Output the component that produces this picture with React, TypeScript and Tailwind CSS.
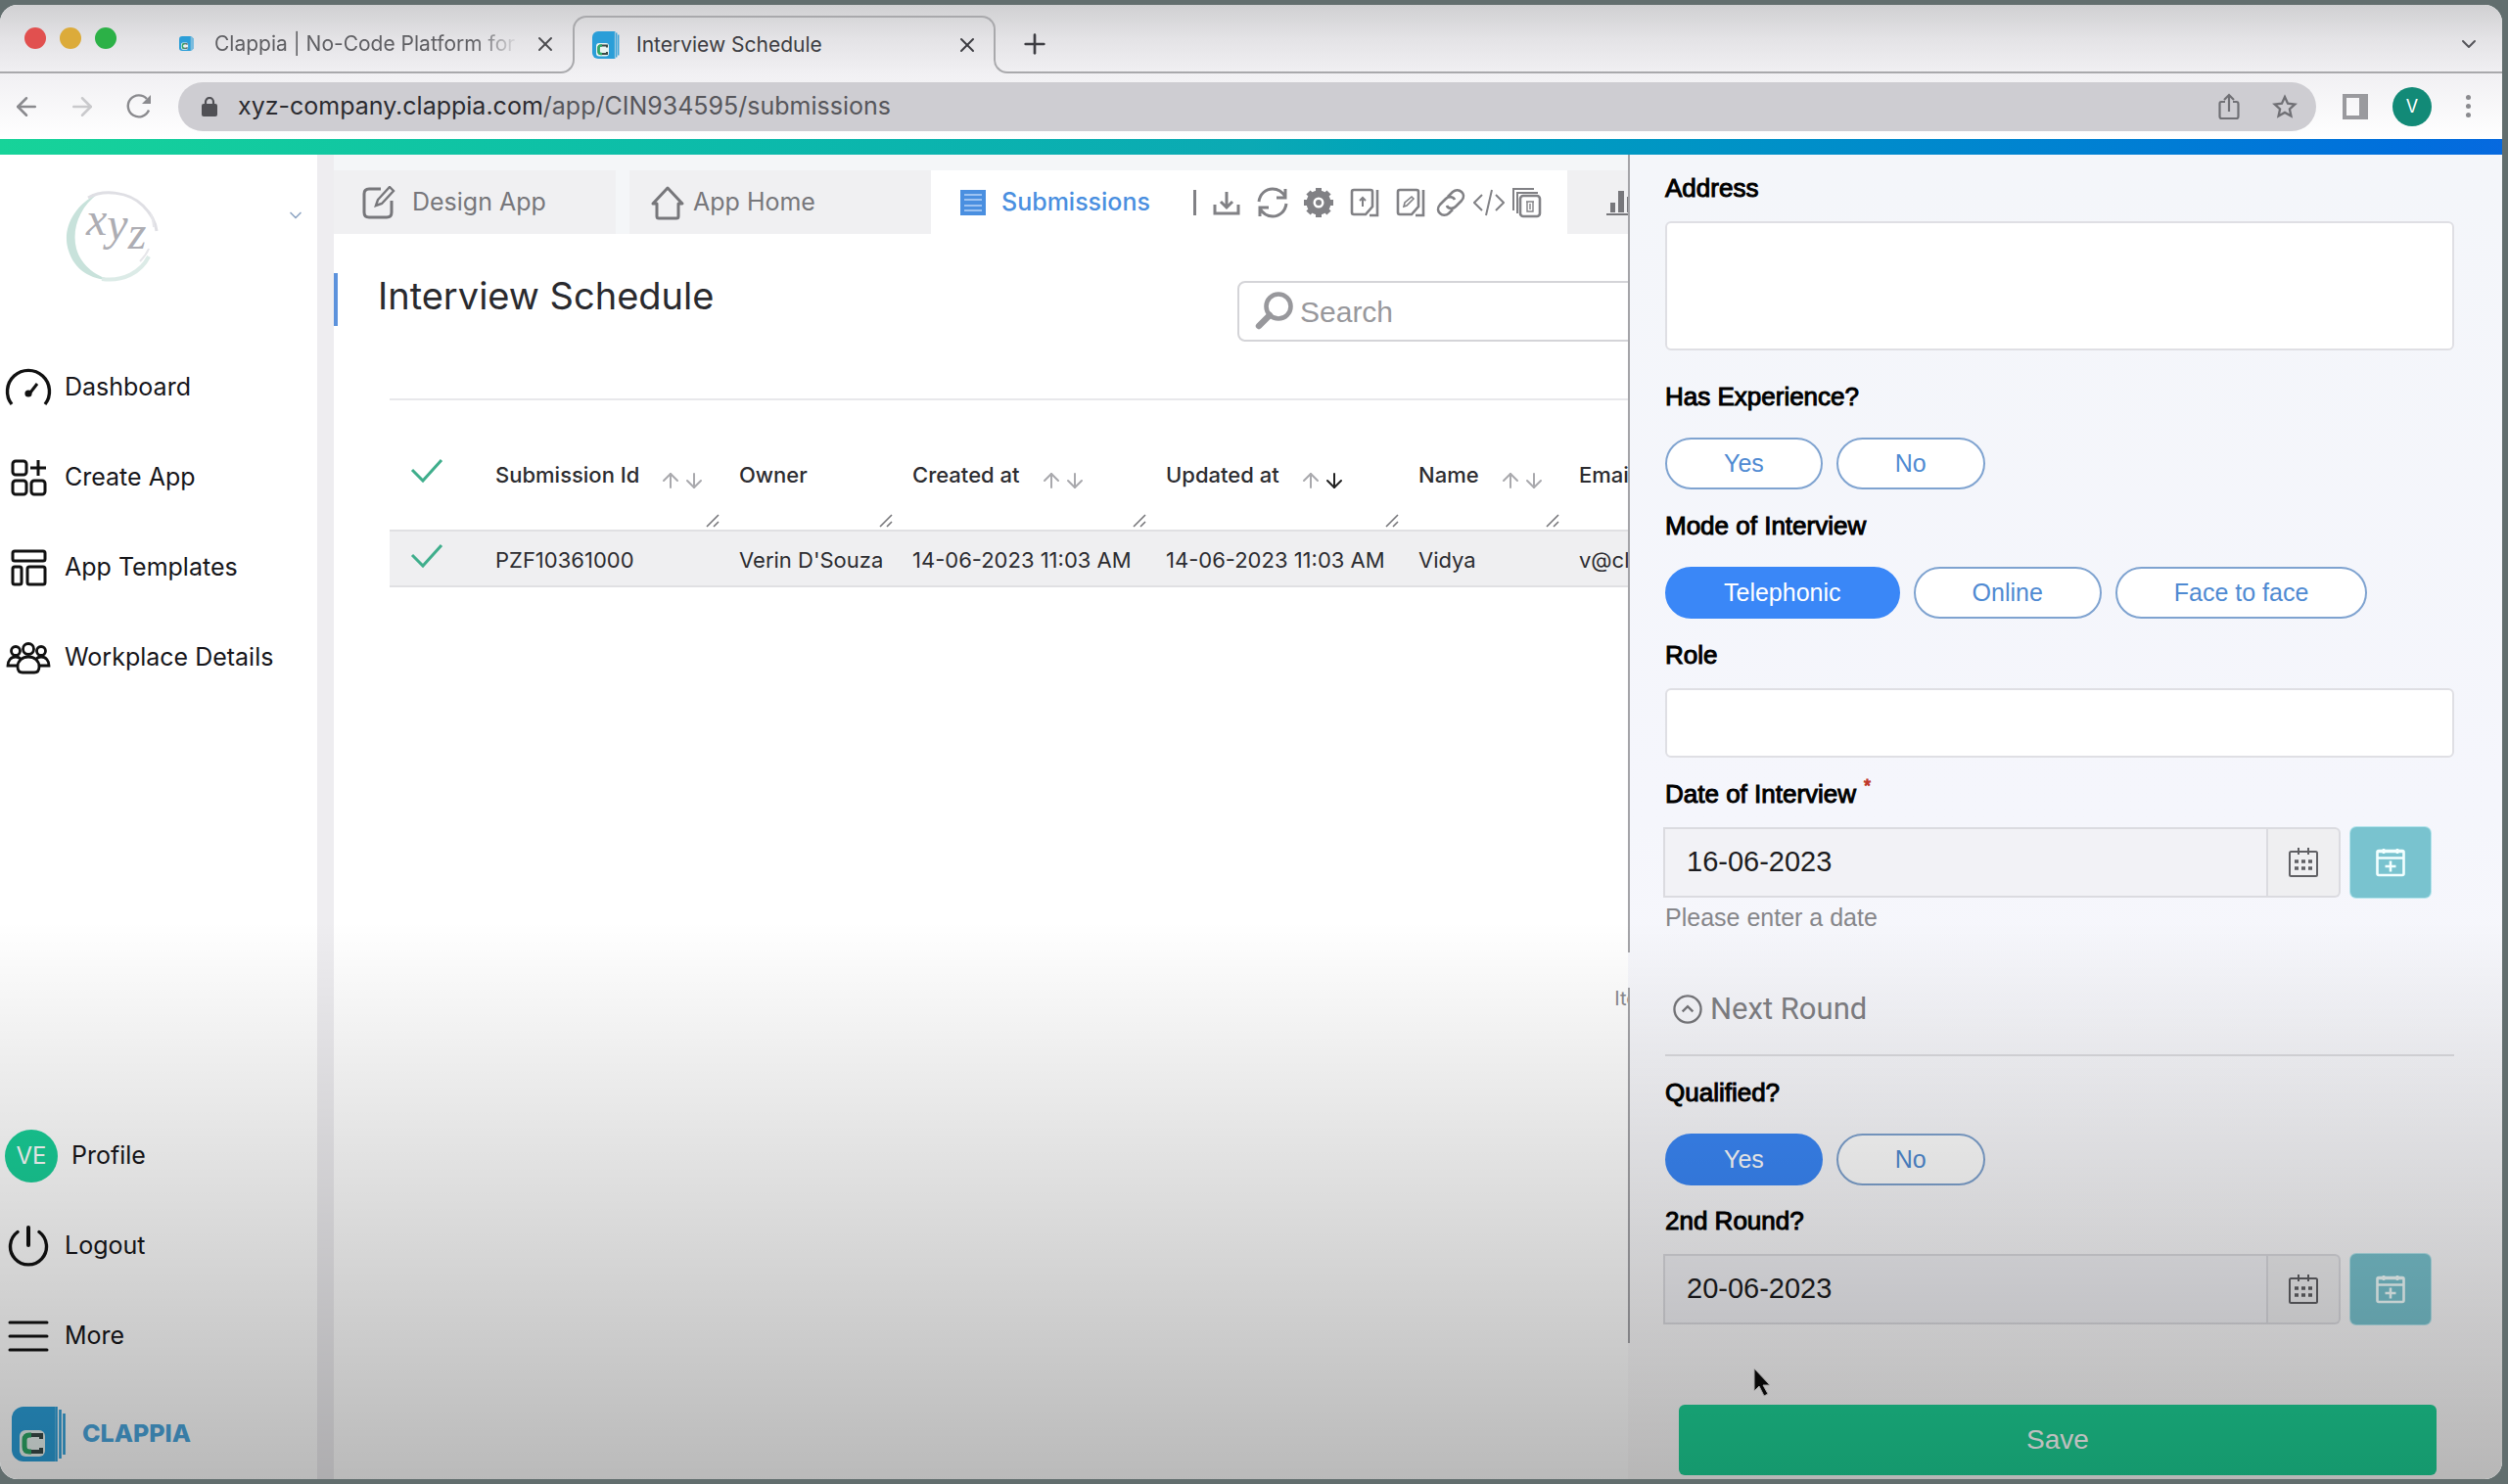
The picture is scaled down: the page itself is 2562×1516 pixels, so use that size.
import { useState, type ReactNode } from "react";
import { ArrowDown, ArrowLeft, ArrowRight, ArrowUp, ChevronDown, Plus, Star, X } from "lucide-react";

function ClappiaMark({ className }: { className: string }) {
  return (
    <svg className={className} viewBox="0 0 56 56" fill="none">
      <path d="M12 0h32v56H12A12 12 0 0 1 0 44V12A12 12 0 0 1 12 0z" fill="#2b9ed8" />
      <path d="M45.5 0v56M49.5 3v50M53.5 7v42" stroke="#2b9ed8" strokeWidth="2.6" />
      <rect x="8" y="24" width="26" height="27" rx="6" fill="#e9f3f0" />
      <path d="M30 33v-4H18q-5 0-5 5v7q0 5 5 5h12v-4" stroke="#3a4a48" strokeWidth="4" />
      <path d="M20 29h-2q-5 0-5 5v7q0 5 5 5h2" stroke="#2ea866" strokeWidth="5" />
    </svg>
  );
}

function WorkspaceLogo() {
  return (
    <svg className="w-[100px] h-[96px]" viewBox="0 0 100 96" fill="none">
      <path d="M34 4C8 16-3 42 4 62c6 20 24 31 46 30C34 90 17 78 12 60 7 40 15 18 34 4z" fill="#c8e2db" />
      <path d="M24 8C40-1 66 2 80 16c8 8 13 16 14 26" stroke="#dfdfe4" strokeWidth="3" />
      <path d="M38 91c22 3 40-7 48-23" stroke="#dcebe7" strokeWidth="4" />
      <path d="M88 24c2 5 3 9 3 14M86 60c-2 5-5 9-9 13" stroke="#e6e6ea" strokeWidth="2" />
      <text x="22" y="46" fill="#adadb3" fontFamily="Liberation Serif, serif" fontStyle="italic" fontSize="48">
        x
        <tspan dy="5">y</tspan>
        <tspan dy="9">z</tspan>
      </text>
    </svg>
  );
}

function SideItem({ icon, label }: { icon: ReactNode; label: string }) {
  return (
    <a href="#" className="flex items-center h-[92px] pl-1 gap-3 text-[25px] text-[#16161a]">
      <span className="flex justify-center w-[50px] shrink-0">{icon}</span>
      {label}
    </a>
  );
}

const sideIcon = "size-12";

function SideBar() {
  return (
    <aside className="flex flex-col w-[324px] shrink-0 bg-white">
      <div className="flex items-start justify-between h-[192px] pt-9 pl-[66px] pr-3">
        <WorkspaceLogo />
        <button type="button" aria-label="Switch workplace" className="pt-4">
          <ChevronDown className="size-5 text-[#8fa6c4]" strokeWidth={2} />
        </button>
      </div>
      <nav>
        <SideItem
          label="Dashboard"
          icon={
            <svg className={sideIcon} viewBox="0 0 48 48" fill="none" stroke="#111" strokeWidth="3.4">
              <path d="M7 41A21.5 21.5 0 1 1 41 41" />
              <path d="M33 20 26 29" strokeWidth="3" />
              <circle cx="24" cy="30" r="3.6" fill="#111" stroke="none" />
            </svg>
          }
        />
        <SideItem
          label="Create App"
          icon={
            <svg className={sideIcon} viewBox="0 0 48 48" fill="none" stroke="#111" strokeWidth="3">
              <rect x="8" y="7" width="14" height="14" rx="3" />
              <rect x="8" y="27" width="14" height="14" rx="3" />
              <rect x="27" y="27" width="14" height="14" rx="3" />
              <path d="M34 6v16M26 14h16" />
            </svg>
          }
        />
        <SideItem
          label="App Templates"
          icon={
            <svg className={sideIcon} viewBox="0 0 48 48" fill="none" stroke="#111" strokeWidth="3">
              <rect x="8" y="7" width="33" height="10" rx="2" />
              <rect x="8" y="23" width="9" height="18" rx="2" />
              <rect x="23" y="23" width="18" height="18" rx="2" />
            </svg>
          }
        />
        <SideItem
          label="Workplace Details"
          icon={
            <svg className={sideIcon} viewBox="0 0 48 48" fill="none" stroke="#111" strokeWidth="2.8">
              <circle cx="24" cy="15" r="5.5" />
              <circle cx="11" cy="17" r="4.5" />
              <circle cx="37" cy="17" r="4.5" />
              <path d="M13 33c0-6 5-10 11-10s11 4 11 10c0 4-2 6-5 6H18c-3 0-5-2-5-6z" />
              <path d="M13 32H3c0-5 3-9 8-9 2 0 3 0 5 2M35 32h10c0-5-3-9-8-9-2 0-3 0-5 2" />
            </svg>
          }
        />
      </nav>
      <nav className="mt-auto">
        <a href="#" className="flex items-center h-[92px] pl-[5px] gap-[14px] text-[25px] text-[#16161a]">
          <span className="flex items-center justify-center size-[54px] rounded-full bg-[#19cf98] text-white text-[24px]">
            VE
          </span>
          Profile
        </a>
        <SideItem
          label="Logout"
          icon={
            <svg className={sideIcon} viewBox="0 0 48 48" fill="none" stroke="#111" strokeWidth="3.4" strokeLinecap="round">
              <path d="M13 9.5A18.5 18.5 0 1 0 35 9.5" />
              <path d="M24 5v18" strokeWidth="4" />
            </svg>
          }
        />
        <SideItem
          label="More"
          icon={
            <svg className={sideIcon} viewBox="0 0 48 48" fill="none" stroke="#111" strokeWidth="3" strokeLinecap="round">
              <path d="M5 10h38M5 24h38M5 38h38" />
            </svg>
          }
        />
        <a href="#" className="flex items-center h-[100px] pt-2 pl-3 gap-4 text-[25px] font-extrabold text-[#4aa5dc]">
          <ClappiaMark className="size-14" />
          CLAPPIA
        </a>
      </nav>
    </aside>
  );
}

function BrowserTabs() {
  return (
    <div className="flex items-end h-[70px] bg-linear-to-b from-[#d0d0d2] via-[#e4e3e6] to-[#f1f0f3] text-[21px]">
      <div className="flex items-center w-[587px] h-[45px] pb-[14px] pl-[25px] border-b-2 border-r-2 border-[#a9a9ac] rounded-br-[14px] text-[#5f5f63]">
        <div className="flex gap-[14px] pb-3">
          <span className="size-[22px] rounded-full bg-[#e1504f]" />
          <span className="size-[22px] rounded-full bg-[#dcab3a]" />
          <span className="size-[22px] rounded-full bg-[#2cb147]" />
        </div>
        <ClappiaMark className="size-[15px] ml-[64px] shrink-0" />
        <div className="w-[312px] ml-[21px] whitespace-nowrap mask-r-from-85%">Clappia | No-Code Platform for</div>
        <button type="button" aria-label="Close tab" className="ml-[14px]">
          <X className="size-6 text-[#4c4c50]" strokeWidth={2} />
        </button>
      </div>
      <div className="relative flex items-center w-[432px] h-[59px] -mx-[2px] pl-5 pr-[17px]">
        <div className="absolute inset-x-0 top-0 h-[14px] border-t-2 border-x-2 border-[#a9a9ac] rounded-t-[14px]" />
        <ClappiaMark className="size-[28px] shrink-0" />
        <span className="flex-1 ml-[17px] text-[#3d3d42]">Interview Schedule</span>
        <button type="button" aria-label="Close tab">
          <X className="size-6 text-[#3d3d42]" strokeWidth={2} />
        </button>
      </div>
      <div className="flex flex-1 items-center justify-between h-[45px] pb-[14px] pl-6 pr-[22px] border-b-2 border-l-2 border-[#a9a9ac] rounded-bl-[14px]">
        <button type="button" aria-label="New tab">
          <Plus className="size-8 text-[#3d3d42]" strokeWidth={2} />
        </button>
        <ChevronDown className="size-6 text-[#55555a]" strokeWidth={2} />
      </div>
    </div>
  );
}

function AddressBar() {
  return (
    <div className="flex items-center h-[67px] pl-3 pr-6 bg-linear-to-b from-[#f1f0f3] to-white">
      <ArrowLeft className="size-[30px] text-[#8a8a8e]" strokeWidth={2} />
      <ArrowRight className="size-[30px] ml-[27px] text-[#c9c9cc]" strokeWidth={2} />
      <svg className="size-[30px] ml-7" viewBox="0 0 30 30" fill="none" stroke="#8a8a8e" strokeWidth="2.4">
        <path d="M25 18.5A11 11 0 1 1 23 7" />
        <path d="M27 3v9h-9z" fill="#8a8a8e" stroke="none" />
      </svg>
      <div className="flex flex-1 items-center h-[50px] ml-[25px] pl-6 pr-[18px] rounded-full bg-[#cecdd2] text-[25px]">
        <svg className="w-4 h-5 shrink-0" viewBox="0 0 16 20" fill="none">
          <rect y="7" width="16" height="13" rx="2" fill="#505055" />
          <path d="M4 8V5a4 4 0 0 1 8 0v3" stroke="#505055" strokeWidth="2.2" />
        </svg>
        <span className="flex-1 ml-[21px] text-[#56565b]">
          <span className="text-[#2b2b30]">xyz-company.clappia.com</span>/app/CIN934595/submissions
        </span>
        <svg className="w-[22px] h-7" viewBox="0 0 22 28" fill="none" stroke="#707075" strokeWidth="2.2">
          <path d="M7 9H3Q1.5 9 1.5 11v13q0 2 2 2h15q2 0 2-2V11q0-2-2-2H15" />
          <path d="M11 19V2M6 7l5-5 5 5" />
        </svg>
        <svg className="size-7 ml-8" viewBox="0 0 24 24" fill="none" stroke="#707075" strokeWidth="2" strokeLinejoin="miter">
          <path d="m12 3.500 2.600 5.700 6.200.7-4.600 4.200 1.300 6.100-5.500-3.100-5.500 3.100 1.300-6.100-4.600-4.200 6.200-.7z" />
        </svg>
      </div>
      <svg className="size-[26px] ml-[27px]" viewBox="0 0 26 26">
        <path d="M0 0h26v26H0zM4 4v18h13V4z" fill="#9a9a9e" fillRule="evenodd" />
      </svg>
      <button
        type="button"
        className="flex items-center justify-center size-10 ml-[25px] rounded-full bg-[#128a77] text-white text-[18px]"
      >
        V
      </button>
      <div className="flex flex-col gap-1 ml-[35px] mr-[8px]">
        <span className="size-[5px] rounded-full bg-[#8a8a8e]" />
        <span className="size-[5px] rounded-full bg-[#8a8a8e]" />
        <span className="size-[5px] rounded-full bg-[#8a8a8e]" />
      </div>
    </div>
  );
}

function ToolButton({ label, children }: { label: string; children: ReactNode }) {
  return (
    <button type="button" aria-label={label}>
      <svg className="size-8" viewBox="0 0 32 32" fill="none" stroke="#818185" strokeWidth="2.6">
        {children}
      </svg>
    </button>
  );
}

function AppTabs() {
  return (
    <div className="flex h-[81px] pt-4 bg-[#f4f6f8] text-[25px] text-[#77777b]">
      <a href="#" className="flex shrink-0 items-center w-[288px] pl-[29px] gap-[17px] bg-[#f0f0f2]">
        <svg className="size-[34px]" viewBox="0 0 34 34" fill="none" stroke="#77777b" strokeWidth="3">
          <path d="M19 3H7Q2 3 2 8v19q0 5 5 5h18q5 0 5-5V15" />
          <path d="m14 20 2-6L28 1l4 4-12 13z" strokeWidth="2.4" />
        </svg>
        Design App
      </a>
      <a href="#" className="flex shrink-0 items-center w-[308px] ml-[14px] pl-[21px] gap-2 bg-[#f0f0f2]">
        <svg className="size-[36px]" viewBox="0 0 36 36" fill="none" stroke="#77777b" strokeWidth="3" strokeLinejoin="round">
          <path d="M7 19H3L18 3l15 16h-4v13q0 2-2 2H9q-2 0-2-2z" />
        </svg>
        App Home
      </a>
      <div className="flex shrink-0 items-center w-[650px] pl-[30px] bg-white">
        <a href="#" className="flex items-center gap-4 text-[#4a8fe0] font-medium">
          <svg className="w-[26px] h-[26px]" viewBox="0 0 26 26" fill="none">
            <path d="M0 0h26v26H0z" fill="#4a8fe0" />
            <path d="M4 5h18M4 10h18M4 16h18M4 21h18" stroke="#b9d5f7" strokeWidth="1.6" />
          </svg>
          Submissions
        </a>
        <div className="flex items-center gap-[15px] ml-[44px]">
          <span className="w-[3px] h-[26px] bg-[#818185]" />
          <ToolButton label="Download">
            <path d="M4 18v9h24V18M16 5v16M10 15l6 6 6-6" strokeWidth="3" />
          </ToolButton>
          <ToolButton label="Refresh">
            <path d="M2 15C3 7 9 2 16 2c6 0 10 3 13 8M29 2v9h-9" strokeWidth="3" />
            <path d="M30 17c-1 8-7 13-14 13-6 0-10-3-13-8M3 30v-9h9" strokeWidth="3" />
          </ToolButton>
          <ToolButton label="Settings">
            <circle cx="16" cy="16" r="9" strokeWidth="7" />
            <path
              d="M16 1v6M16 25v6M1 16h6M25 16h6M5.500 5.500l4 4M22.500 22.500l4 4M5.500 26.500l4-4M22.500 9.500l4-4"
              strokeWidth="6"
            />
            <circle cx="16" cy="16" r="3" fill="#818185" stroke="none" />
          </ToolButton>
          <ToolButton label="Bulk upload">
            <path d="M5 3h17q2 0 2 2v15l-7 8H5q-2 0-2-2V5q0-2 2-2zM29 3v26h-8" />
            <path d="M14 20v-8M11 14l3-3 3 3" strokeWidth="2" />
          </ToolButton>
          <ToolButton label="Bulk edit">
            <path d="M5 3h17q2 0 2 2v15l-7 8H5q-2 0-2-2V5q0-2 2-2zM29 3v26h-8" />
            <path d="m9 20 1-4 7-6 2 2-7 7z" strokeWidth="1.6" />
          </ToolButton>
          <div className="flex gap-[7px] -ml-[6px]">
            <ToolButton label="Copy link">
              <path d="m13 10 5-5c6-5 15 2 9 9l-6 6c-3 3-8 2-9-1" />
              <path d="m18 23-4 4c-6 5-15-2-9-9l6-6c3-3 8-2 9 1" />
            </ToolButton>
            <ToolButton label="Embed">
              <path d="M9 8 1 16l8 8M23 8l8 8-8 8M19 3l-6 26" strokeWidth="2" />
            </ToolButton>
            <ToolButton label="Bulk delete">
              <rect x="9" y="9" width="20" height="21" rx="3" />
              <path d="M6 27V6h21M2 24V2h21" strokeWidth="2" />
              <path d="M15 15h8M16 15v10h6V15M19 17v6" strokeWidth="1.4" />
            </ToolButton>
          </div>
        </div>
      </div>
      <a href="#" aria-label="Analytics" className="flex flex-1 shrink-0 items-center min-w-[120px] pl-10 bg-[#f0f0f2]">
        <svg className="size-7" viewBox="0 0 28 28" fill="#77777b">
          <path d="M0 25h28v2H0zM4 14h5v10H4zM12 2h6v22h-6zM21 8h5v16h-5z" />
        </svg>
      </a>
    </div>
  );
}

function Tick() {
  return (
    <svg className="w-9 h-7" viewBox="0 0 36 28" fill="none" stroke="#3fae8c" strokeWidth="3">
      <path d="m3 12 11 11L33 2" />
    </svg>
  );
}

const columns = [
  { name: "Submission Id", sortable: true, value: "PZF10361000" },
  { name: "Owner", sortable: false, value: "Verin D'Souza" },
  { name: "Created at", sortable: true, value: "14-06-2023 11:03 AM" },
  { name: "Updated at", sortable: true, sorted: true, value: "14-06-2023 11:03 AM" },
  { name: "Name", sortable: true, value: "Vidya" },
  { name: "Email", sortable: false, value: "v@clappia.com" },
];

function SubmissionsTable() {
  return (
    <table className="table-fixed w-[1420px] ml-[57px] border-t-2 border-[#e8e8eb] text-[22px] text-[#2c2c30]">
      <colgroup>
        <col className="w-[88px]" />
        <col className="w-[249px]" />
        <col className="w-[177px]" />
        <col className="w-[259px]" />
        <col className="w-[258px]" />
        <col className="w-[164px]" />
        <col className="w-[225px]" />
      </colgroup>
      <thead>
        <tr className="h-[134px]">
          <th className="pl-5 pt-[14px] align-middle">
            <Tick />
          </th>
          {columns.map((col) => (
            <th key={col.name} className="relative pl-5 pt-[20px] text-left font-medium whitespace-nowrap">
              <span className="flex items-center">
                {col.name}
                {col.sortable && (
                  <span className="flex ml-5 pt-3">
                    <ArrowUp className="size-6 text-[#a9a9ad]" strokeWidth={2} />
                    <ArrowDown className={col.sorted ? "size-6 text-[#222]" : "size-6 text-[#a9a9ad]"} strokeWidth={2} />
                  </span>
                )}
              </span>
              <svg className="absolute right-0 bottom-[2px] size-[14px]" viewBox="0 0 14 14" stroke="#77777b" strokeWidth="1.6">
                <path d="M1 13 13 1M8 13l5-5" />
              </svg>
            </th>
          ))}
        </tr>
      </thead>
      <tbody>
        <tr className="h-[57px] border-y-2 border-[#e0e0e3] bg-[#efeff1]">
          <td className="pl-5 pb-1">
            <Tick />
          </td>
          {columns.map((col) => (
            <td key={col.name} className="pl-5 pt-1 whitespace-nowrap">
              {col.value}
            </td>
          ))}
        </tr>
      </tbody>
    </table>
  );
}

function Submissions() {
  return (
    <main className="flex flex-1 flex-col min-w-0 overflow-hidden bg-white">
      <AppTabs />
      <div className="flex items-start pt-10">
        <span className="w-1 h-[54px] bg-[#5c92dc]" />
        <h1 className="flex-1 ml-[41px] text-[38px] leading-[46px] text-[#2a2a2e]">Interview Schedule</h1>
        <label className="flex items-center shrink-0 w-[420px] h-[62px] mt-2 -mr-[21px] pl-4 gap-1.5 border-2 border-[#d4d4d8] rounded-lg">
          <svg className="size-10" viewBox="0 0 40 40" fill="none" stroke="#98989c">
            <circle cx="24" cy="15" r="12.5" strokeWidth="4.6" />
            <path d="m15 24-11 11" strokeWidth="6.4" strokeLinecap="round" />
          </svg>
          <input
            type="text"
            placeholder="Search"
            className="w-[300px] outline-none font-['Liberation_Sans',sans-serif] text-[30px] placeholder:text-[#98989c]"
          />
        </label>
      </div>
      <div className="mt-[58px]">
        <SubmissionsTable />
      </div>
      <p className="mt-[405px] -mr-[38px] text-right text-[20px] whitespace-nowrap text-[#8a8a8e]">Items</p>
    </main>
  );
}

function Pills({ name, options, initial }: { name: string; options: string[]; initial?: string }) {
  const [value, setValue] = useState(initial);
  return (
    <div role="group" aria-label={name} className="flex gap-[14px] mt-[26px] text-[25px]">
      {options.map((option) => (
        <button
          key={option}
          type="button"
          aria-pressed={value === option}
          onClick={() => setValue(option)}
          className={
            value === option
              ? "h-[53px] px-[58px] rounded-full border-2 border-[#3a87f7] bg-[#3a87f7] text-white"
              : "h-[53px] px-[58px] rounded-full border-2 border-[#7fa3d0] bg-white text-[#4f8ad2]"
          }
        >
          {option}
        </button>
      ))}
    </div>
  );
}

function DateField({ id, value }: { id: string; value: string }) {
  return (
    <div className="flex mt-[18px] -ml-[2px] mr-[24px] h-[72px]">
      <input
        id={id}
        type="text"
        defaultValue={value}
        className="flex-1 min-w-0 pl-[22px] border-2 border-[#dbdbe0] bg-[#f2f2f6] text-[29px] text-[#1c1c20] outline-none"
      />
      <button
        type="button"
        aria-label="Pick a date"
        className="flex items-center justify-center w-[74px] border-2 border-l-0 border-[#dbdbe0] rounded-r-md bg-[#efeff1]"
      >
        <svg className="size-[30px]" viewBox="0 0 30 30" fill="none" stroke="#606064" strokeWidth="2">
          <rect x="1" y="4" width="28" height="25" rx="1.5" />
          <path d="M10 0v7M20 0v7" />
          <path d="M6 14h4M13 14h4M20 14h4M6 21h4M13 21h4M20 21h4" strokeWidth="3.6" />
        </svg>
      </button>
      <button
        type="button"
        aria-label="Add to calendar"
        className="flex items-center justify-center w-[82px] ml-[10px] rounded-md bg-[#79c3cf] ring-1 ring-[#b4e4ec]"
      >
        <svg className="size-[30px]" viewBox="0 0 30 30" fill="none" stroke="#f2ffff" strokeWidth="2.6">
          <rect x="1.5" y="3" width="27" height="25" rx="1.5" />
          <path d="M2 10.5h26M8 1v5M22 1v5M2 4h26M15 13.5v11M9.500 19h11" />
        </svg>
      </button>
    </div>
  );
}

const labelClass = "block text-[26px] leading-8 text-black [-webkit-text-stroke:1px]";

function EditPanel() {
  return (
    <form className="relative flex flex-col w-[893px] shrink-0 bg-linear-to-b from-[#f4f6fa] via-[#f5f6fc] to-[#fbfafa] font-['Liberation_Sans',sans-serif]">
      <section className="pt-[18px] pb-5 pl-9 pr-[49px] border-l-2 border-[#a4a4a8]">
        <label htmlFor="address" className={labelClass}>
          Address
        </label>
        <textarea
          id="address"
          className="block w-full h-[132px] mt-[18px] p-4 border-2 border-[#dfdfe4] rounded-md bg-white text-[26px] resize-none outline-none"
        />
        <p className={`${labelClass} mt-[31px]`}>Has Experience?</p>
        <Pills name="Has Experience?" options={["Yes", "No"]} />
        <p className={`${labelClass} mt-[21px]`}>Mode of Interview</p>
        <Pills name="Mode of Interview" options={["Telephonic", "Online", "Face to face"]} initial="Telephonic" />
        <label htmlFor="role" className={`${labelClass} mt-[21px]`}>
          Role
        </label>
        <input
          id="role"
          type="text"
          className="block w-full h-[71px] mt-[18px] px-4 border-2 border-[#dfdfe4] rounded-md bg-white text-[26px] outline-none"
        />
        <label htmlFor="interview-date" className={`${labelClass} mt-[21px]`}>
          Date of Interview
          <span className="inline-block pl-2 align-top text-[18px] leading-4 text-[#c0392b]">*</span>
        </label>
        <DateField id="interview-date" value="16-06-2023" />
        <p className="mt-1 text-[25px] leading-8 text-[#86868a]">Please enter a date</p>
      </section>

      <section className="mt-9 pt-1.5 pb-[19px] pl-9 pr-[49px] border-l-2 border-[#a4a4a8]">
        <button
          type="button"
          className="flex items-center h-8 pl-2 gap-2 font-[Roboto,sans-serif] text-[31px] leading-8 text-[#808084]"
        >
          <svg className="size-[30px]" viewBox="0 0 31 31" fill="none" stroke="#77777b" strokeWidth="2.4">
            <circle cx="15.5" cy="15.5" r="14" />
            <path d="m10 18 5.5-5.5L21 18" />
          </svg>
          Next Round
        </button>
        <hr className="mt-[30px] border-t-2 border-[#dcdce0]" />
        <p className={`${labelClass} mt-[21px]`}>Qualified?</p>
        <Pills name="Qualified?" options={["Yes", "No"]} initial="Yes" />
        <label htmlFor="second-round" className={`${labelClass} mt-5`}>
          2nd Round?
        </label>
        <DateField id="second-round" value="20-06-2023" />
      </section>

      <div className="mt-auto pb-1 pl-[52px] pr-[67px]">
        <button type="button" className="w-full h-[72px] rounded-md bg-[#1dd095] text-[28px] text-white">
          Save
        </button>
      </div>

      {/* mouse pointer */}
      <svg className="absolute left-[128px] bottom-[84px] w-[18px] h-[30px]" viewBox="0 0 18 30">
        <path d="M1 1v23l5-5 5 10 4-2-5-9h7z" fill="#0a0a0a" stroke="#dddddd" strokeWidth="1" />
      </svg>
    </form>
  );
}

export default function App() {
  return (
    <div className="flex min-h-screen pt-[5px] pr-1.5 pb-[5px] bg-[#626e6e] font-[Inter,sans-serif]">
      <div className="relative flex flex-1 flex-col min-w-0 overflow-hidden rounded-[18px] bg-white">
        <BrowserTabs />
        <AddressBar />
        <div className="h-4 bg-linear-to-r from-[#17d399] via-[#0ba9b4] to-[#0669df]" />
        <div className="flex flex-1">
          <SideBar />
          <div className="w-[17px] shrink-0 bg-[#eeedf0]" />
          <Submissions />
          <EditPanel />
        </div>
        {/* player shade along the bottom */}
        <div className="absolute inset-x-0 bottom-0 h-[570px] pointer-events-none bg-linear-to-t from-black/27 to-transparent" />
      </div>
    </div>
  );
}
